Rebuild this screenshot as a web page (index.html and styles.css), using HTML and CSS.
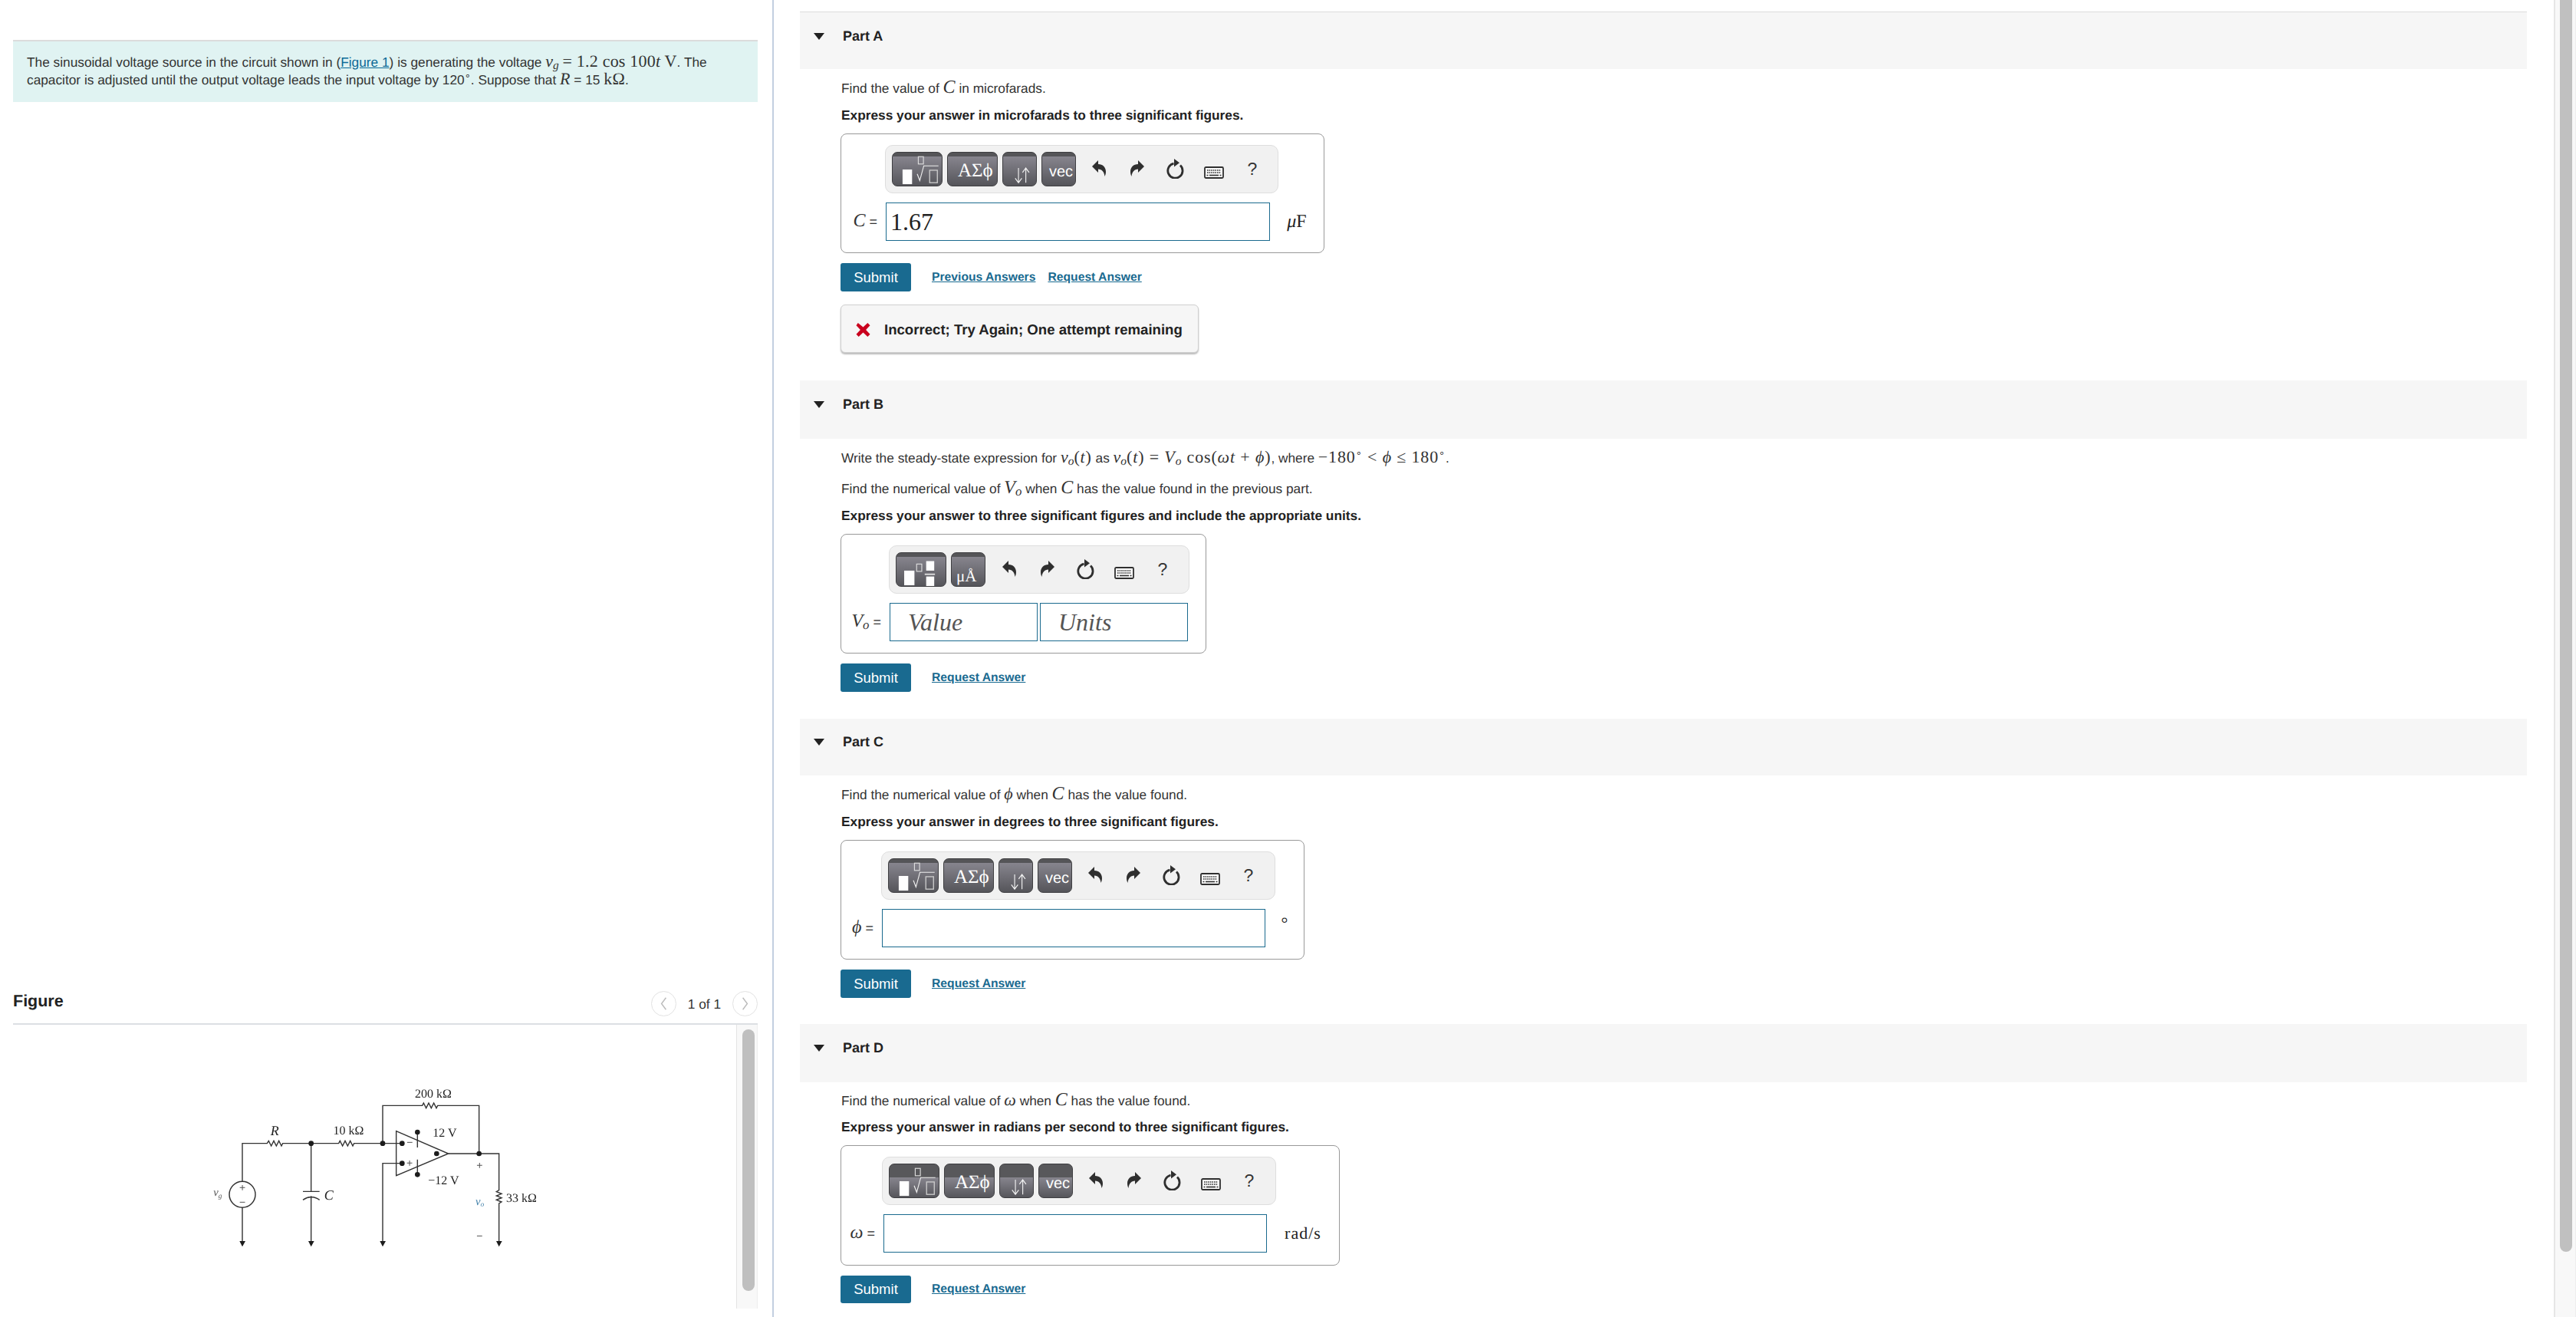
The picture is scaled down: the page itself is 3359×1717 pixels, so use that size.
FILE: index.html
```html
<!DOCTYPE html>
<html lang="en">
<head>
<meta charset="utf-8">
<title>Part A</title>
<link rel="stylesheet" href="styles.css">
</head>
<body>
<svg class="defs" width="0" height="0" aria-hidden="true">
  <symbol id="i-undo" viewBox="0 0 18 21"><path d="M0 8 L8 0 V5 C14 5 18 9 18 15 C18 18 17 20 16.5 21 C16 15.5 13 11.5 8 11.5 V16 Z"/></symbol>
  <symbol id="i-redo" viewBox="0 0 18 21"><path d="M18 8 L10 0 V5 C4 5 0 9 0 15 C0 18 1 20 1.5 21 C2 15.5 5 11.5 10 11.5 V16 Z"/></symbol>
  <symbol id="i-reset" viewBox="0 0 24 26"><path d="M9.5 6.2 A9.6 9.6 0 1 0 18 8.6" fill="none" stroke="currentColor" stroke-width="2.8"/><path d="M10 0 L17 5.2 L10 10.4 Z"/></symbol>
  <symbol id="i-kbd" viewBox="0 0 26 16"><rect x="1" y="1" width="24" height="14" rx="1.5" fill="#fafafa" stroke="currentColor" stroke-width="1.8"/><path d="M4 5h18M4 8h18" stroke="currentColor" stroke-width="1.6" stroke-dasharray="1.6 1"/><path d="M7 11.5h12" stroke="currentColor" stroke-width="1.6"/><path d="M3.5 11.5h2M20.5 11.5h2" stroke="currentColor" stroke-width="1.4"/></symbol>
  <symbol id="i-templates" viewBox="0 0 66 45"><rect x="13" y="23" width="13" height="20" fill="#fff"/><rect x="34.5" y="5.5" width="7" height="10" fill="none" stroke="#ddd" stroke-width="1.2"/><path d="M33 29 L36.5 38 L42 18 H62" fill="none" stroke="#eee" stroke-width="1.2"/><rect x="50" y="24" width="10.5" height="17" fill="none" stroke="#ccc" stroke-width="1.4"/></symbol>
  <symbol id="i-arrows" viewBox="0 0 45 45"><path d="M21 21 V40 M16.5 35 L21 41 L25.5 35 M31 41 V22 M26.5 27 L31 21 L35.5 27" fill="none" stroke="#f2f2f2" stroke-width="1.2"/></symbol>
  <symbol id="i-fraction" viewBox="0 0 66 45"><rect x="10" y="24" width="14" height="20" fill="#fff"/><rect x="27" y="15" width="7" height="10" fill="none" stroke="#ddd" stroke-width="1.2"/><rect x="40" y="11" width="11" height="13" fill="#fff"/><rect x="38" y="28" width="14" height="2" fill="#ddd"/><rect x="40" y="32" width="11" height="13" fill="#fff"/></symbol>
  <symbol id="i-x" viewBox="0 0 20 20"><path d="M2.5 0 L10 6 L16.5 0 L20 3.5 L14 10 L20 16.5 L16.5 20 L10 14 L3.5 20 L0 16.5 L6 10 L0 3.5 Z"/></symbol>
  <symbol id="i-prev" viewBox="0 0 32 32"><path d="M19 8 L13 16 L19 24" fill="none" stroke="#bbb" stroke-width="1.5"/></symbol>
  <symbol id="i-next" viewBox="0 0 32 32"><path d="M13 8 L19 16 L13 24" fill="none" stroke="#bbb" stroke-width="1.5"/></symbol>
</svg>

<div class="page">
  <aside class="left">
    <div class="problem">
      The sinusoidal voltage source in the circuit shown in (<a class="link" href="#">Figure 1</a>) is generating the voltage <span class="mi">v<sub>g</sub></span> <span class="mn">= 1.2 cos 100<i>t</i> V</span>. The<br>
      capacitor is adjusted until the output voltage leads the input voltage by 120<sup class="deg">∘</sup>. Suppose that <span class="mi">R</span> = 15 <span class="mn">kΩ</span>.
    </div>

    <div class="fig-head">
      <h2 class="fig-title">Figure</h2>
      <div class="pager">
        <span class="round"><svg class="round-icon"><use href="#i-prev"/></svg></span>
        <span class="pager-text">1 of 1</span>
        <span class="round"><svg class="round-icon"><use href="#i-next"/></svg></span>
      </div>
    </div>

    <div class="fig-panel">
      <div class="fig-canvas">
        <svg class="circuit" viewBox="0 0 1500 840" role="img" aria-label="Circuit diagram">
          <g class="wire">
            <path d="M258 720 V332 H355 l6 -10 l10 20 l10 -20 l10 20 l10 -20 l10 20 l5 -10 H635 l5 -10 l10 20 l10 -20 l10 20 l10 -20 l10 20 l5 -10 H883"/>
            <path d="M527 332 V520 M495 520 H560 M495 553 Q527 530 560 553 M527 538 V720"/>
            <path d="M807 332 V184 H962 l5 -10 l10 20 l10 -20 l10 20 l10 -20 l10 20 l5 -10 H1184 V372"/>
            <path d="M860 284 L1064 372 L860 458 Z"/>
            <path d="M807 720 V410 H883"/>
            <path d="M943 288 V348 M943 454 V395"/>
            <path d="M1064 372 H1262 V515 l-10 6 l20 8 l-20 8 l20 8 l-20 8 l20 8 l-10 6 V720"/>
          </g>
          <circle class="source" cx="258" cy="532" r="51"/>
          <g class="dot">
            <circle cx="527" cy="332" r="10"/><circle cx="807" cy="332" r="10"/><circle cx="883" cy="332" r="10"/><circle cx="883" cy="410" r="10"/>
            <circle cx="943" cy="288" r="10"/><circle cx="943" cy="454" r="10"/><circle cx="1018" cy="372" r="10"/><circle cx="1184" cy="372" r="10"/>
            <path d="M247 714 H270 L258 736 Z M516 714 H539 L527 736 Z M796 714 H819 L807 736 Z M1251 714 H1274 L1262 736 Z"/>
          </g>
          <g class="ctext">
            <text x="1005" y="152" text-anchor="middle">200 kΩ</text>
            <text x="673" y="297" text-anchor="middle">10 kΩ</text>
            <text x="385" y="300" text-anchor="middle" class="cit">R</text>
            <text x="1050" y="305" text-anchor="middle">12 V</text>
            <text x="1045" y="492" text-anchor="middle">−12 V</text>
            <text x="1350" y="560" text-anchor="middle">33 kΩ</text>
            <text x="596" y="552" text-anchor="middle" class="cit">C</text>
            <text x="145" y="538" class="cit cgrey">v<tspan dy="8" class="csub">g</tspan></text>
            <text x="1170" y="572" class="cit cblue">v<tspan dy="8" class="csub">o</tspan></text>
            <text x="258" y="518" text-anchor="middle" class="csign">+</text>
            <text x="258" y="575" text-anchor="middle" class="csign">−</text>
            <text x="1186" y="432" text-anchor="middle" class="csign cblue">+</text>
            <text x="1186" y="708" text-anchor="middle" class="csign cblue">−</text>
            <text x="913" y="343" text-anchor="middle" class="csign">−</text>
            <text x="912" y="423" text-anchor="middle" class="csign">+</text>
          </g>
        </svg>
      </div>
      <div class="fig-scroll"><div class="fig-thumb"></div></div>
    </div>
  </aside>

  <main class="main">
    <!-- Part A -->
    <section class="part part-a">
      <header class="part-head"><span class="tri"></span><h3 class="part-title">Part A</h3></header>
      <div class="part-body">
        <p class="para">Find the value of <span class="mi big">C</span> in microfarads.</p>
        <p class="para strong">Express your answer in microfarads to three significant figures.</p>
        <div class="answer answer-a">
          <div class="toolbar">
            <span class="tb tb-w"><svg class="tb-svg"><use href="#i-templates"/></svg></span>
            <span class="tb tb-w tb-greek">ΑΣϕ</span>
            <span class="tb tb-n"><svg class="tb-svg"><use href="#i-arrows"/></svg></span>
            <span class="tb tb-n tb-vec">vec</span>
            <span class="slot"><svg class="ico-undo"><use href="#i-undo"/></svg></span>
            <span class="slot"><svg class="ico-undo"><use href="#i-redo"/></svg></span>
            <span class="slot"><svg class="ico-reset"><use href="#i-reset"/></svg></span>
            <span class="slot"><svg class="ico-kbd"><use href="#i-kbd"/></svg></span>
            <span class="slot help">?</span>
          </div>
          <label class="lbl"><span class="mi big">C</span>&nbsp;=</label>
          <input class="field field-val" value="1.67" aria-label="C">
          <span class="unit"><i>μ</i>F</span>
        </div>
        <div class="actions">
          <button class="submit">Submit</button>
          <a class="act" href="#">Previous Answers</a>
          <a class="act" href="#">Request Answer</a>
        </div>
        <div class="feedback"><svg class="fb-x"><use href="#i-x"/></svg><span>Incorrect; Try Again; One attempt remaining</span></div>
      </div>
    </section>

    <!-- Part B -->
    <section class="part part-b">
      <header class="part-head"><span class="tri"></span><h3 class="part-title">Part B</h3></header>
      <div class="part-body">
        <p class="para para-tall">Write the steady-state expression for <span class="mi">v<sub>o</sub></span><span class="mn">(<i>t</i>)</span> as <span class="mi">v<sub>o</sub></span><span class="mn">(<i>t</i>) = <i>V<sub>o</sub></i> cos(<i>ωt</i> + <i>ϕ</i>)</span>, where <span class="mn">−180<sup class="deg">∘</sup> &lt; <i>ϕ</i> ≤ 180<sup class="deg">∘</sup></span>.</p>
        <p class="para">Find the numerical value of <span class="mi big">V<sub>o</sub></span> when <span class="mi big">C</span> has the value found in the previous part.</p>
        <p class="para strong">Express your answer to three significant figures and include the appropriate units.</p>
        <div class="answer answer-b">
          <div class="toolbar">
            <span class="tb tb-w"><svg class="tb-svg"><use href="#i-fraction"/></svg></span>
            <span class="tb tb-n tb-unit">μÅ</span>
            <span class="slot"><svg class="ico-undo"><use href="#i-undo"/></svg></span>
            <span class="slot"><svg class="ico-undo"><use href="#i-redo"/></svg></span>
            <span class="slot"><svg class="ico-reset"><use href="#i-reset"/></svg></span>
            <span class="slot"><svg class="ico-kbd"><use href="#i-kbd"/></svg></span>
            <span class="slot help">?</span>
          </div>
          <label class="lbl"><span class="mi big">V<sub>o</sub></span>&nbsp;=</label>
          <div class="pair">
            <input class="field field-ph" placeholder="Value" aria-label="Value">
            <input class="field field-ph" placeholder="Units" aria-label="Units">
          </div>
        </div>
        <div class="actions">
          <button class="submit">Submit</button>
          <a class="act" href="#">Request Answer</a>
        </div>
      </div>
    </section>

    <!-- Part C -->
    <section class="part part-c">
      <header class="part-head"><span class="tri"></span><h3 class="part-title">Part C</h3></header>
      <div class="part-body">
        <p class="para">Find the numerical value of <span class="mi">ϕ</span> when <span class="mi big">C</span> has the value found.</p>
        <p class="para strong">Express your answer in degrees to three significant figures.</p>
        <div class="answer answer-c">
          <div class="toolbar">
            <span class="tb tb-w"><svg class="tb-svg"><use href="#i-templates"/></svg></span>
            <span class="tb tb-w tb-greek">ΑΣϕ</span>
            <span class="tb tb-n"><svg class="tb-svg"><use href="#i-arrows"/></svg></span>
            <span class="tb tb-n tb-vec">vec</span>
            <span class="slot"><svg class="ico-undo"><use href="#i-undo"/></svg></span>
            <span class="slot"><svg class="ico-undo"><use href="#i-redo"/></svg></span>
            <span class="slot"><svg class="ico-reset"><use href="#i-reset"/></svg></span>
            <span class="slot"><svg class="ico-kbd"><use href="#i-kbd"/></svg></span>
            <span class="slot help">?</span>
          </div>
          <label class="lbl"><span class="mi big">ϕ</span>&nbsp;=</label>
          <input class="field" aria-label="phi">
          <span class="unit unit-deg">°</span>
        </div>
        <div class="actions">
          <button class="submit">Submit</button>
          <a class="act" href="#">Request Answer</a>
        </div>
      </div>
    </section>

    <!-- Part D -->
    <section class="part part-d">
      <header class="part-head"><span class="tri"></span><h3 class="part-title">Part D</h3></header>
      <div class="part-body">
        <p class="para">Find the numerical value of <span class="mi">ω</span> when <span class="mi big">C</span> has the value found.</p>
        <p class="para strong">Express your answer in radians per second to three significant figures.</p>
        <div class="answer answer-d">
          <div class="toolbar">
            <span class="tb tb-w tb-thick"><svg class="tb-svg"><use href="#i-templates"/></svg></span>
            <span class="tb tb-w tb-greek tb-thick">ΑΣϕ</span>
            <span class="tb tb-n tb-thick"><svg class="tb-svg"><use href="#i-arrows"/></svg></span>
            <span class="tb tb-n tb-vec tb-thick">vec</span>
            <span class="slot"><svg class="ico-undo"><use href="#i-undo"/></svg></span>
            <span class="slot"><svg class="ico-undo"><use href="#i-redo"/></svg></span>
            <span class="slot"><svg class="ico-reset"><use href="#i-reset"/></svg></span>
            <span class="slot"><svg class="ico-kbd"><use href="#i-kbd"/></svg></span>
            <span class="slot help">?</span>
          </div>
          <label class="lbl"><span class="mi big">ω</span>&nbsp;=</label>
          <input class="field" aria-label="omega">
          <span class="unit unit-wide">rad/s</span>
        </div>
        <div class="actions">
          <button class="submit">Submit</button>
          <a class="act" href="#">Request Answer</a>
        </div>
      </div>
    </section>
  </main>

  <div class="page-scroll"><div class="page-thumb"></div></div>
</div>
</body>
</html>
```

FILE: styles.css
```css
* { box-sizing: border-box; }
html, body { margin: 0; height: 100%; overflow: hidden; background: #fff; }
body { font: 17.3px/24px "Liberation Sans", Arial, sans-serif; color: #333; text-rendering: geometricPrecision; }
.defs { position: absolute; }
.page { display: flex; height: 100vh; }

/* left column */
.left { width: 1009px; flex: none; padding: 52px 19px 0 17px; border-right: 2px solid #c3cfe0; }
.problem { height: 81px; padding: 16px 18px 0; background: #e0f3f2; border-top: 2px solid #dcdcdc; line-height: 23px; }
.link { color: #0b6a97; text-decoration: underline; }
.mi { font-family: "Liberation Serif", serif; font-style: italic; font-size: 22px; line-height: 0; }
.mi.big { font-size: 24px; }
.mn { font-family: "Liberation Serif", serif; font-size: 22px; letter-spacing: .2px; line-height: 0; }
sub { font-size: .7em; line-height: 0; font-style: italic; vertical-align: -.2em; }
.deg { font-size: 13px; line-height: 0; }

.fig-head { display: flex; justify-content: space-between; align-items: flex-start; height: 44px; margin-top: 1159px; border-bottom: 2px solid #dcdfe3; }
.fig-title { margin: 0; font-size: 21.5px; line-height: 26px; font-weight: 700; color: #222; }
.pager { display: flex; align-items: center; gap: 15px; height: 33px; }
.pager-text { color: #333; }
.round { width: 33px; height: 33px; border: 1px solid #e2e2e2; border-radius: 50%; display: block; }
.round-icon { width: 31px; height: 31px; display: block; }

.fig-panel { display: flex; height: 370px; }
.fig-canvas { flex: 1; padding: 44px 0 0 213px; }
.circuit { width: 500px; height: 280px; display: block; filter: blur(.4px); }
.wire path { fill: none; stroke: #333; stroke-width: 4.2; }
.source { fill: #fff; stroke: #333; stroke-width: 4.4; }
.dot { fill: #1c1c1c; }
.ctext text { font-family: "Liberation Serif", serif; font-size: 48px; fill: #222; }
.ctext .cit { font-style: italic; font-size: 54px; }
.ctext .cgrey { font-size: 44px; fill: #555; }
.ctext .cblue { fill: #3f7fa8; font-size: 44px; }
.ctext .csign { font-size: 42px; fill: #555; font-family: "Liberation Sans", sans-serif; }
.ctext .csub { font-size: 28px; }
.fig-scroll { width: 28px; padding: 6px 5px 0 7px; background: #f8f8f8; border-left: 1px solid #e4e4e4; border-right: 1px solid #eee; }
.fig-thumb { width: 16px; height: 341px; border-radius: 8px; background: #bfbfbf; }

/* right column */
.main { flex: 1; min-width: 0; padding: 15px 35px 0 34px; }
.part { margin-bottom: 35px; }
.part-a { margin-bottom: 36px; }
.part-c { margin-bottom: 34px; }
.part-head { display: flex; align-items: flex-start; gap: 24px; height: 75px; padding: 19px 0 0 18px; background: #f6f6f6; }
.part-a .part-head { border-top: 1px solid #dcdcdc; }
.part-b .part-head, .part-d .part-head { height: 76px; }
.part-c .part-head { height: 74px; padding-top: 18px; }
.tri { width: 0; height: 0; margin-top: 8px; border: 7px solid transparent; border-top: 9px solid #222; border-bottom: 0; }
.part-title { margin: 0; font-size: 18px; line-height: 24px; font-weight: 700; color: #222; }
.part-body { padding: 13px 0 0 53px; }
.part-d .part-body { padding-top: 12px; }
.para { height: 24px; margin: 0 0 11px; padding-left: 1px; white-space: nowrap; line-height: 24px; }
.part-d .para { margin-bottom: 10px; }
.para-tall { margin-bottom: 16px; }
.para-tall .mn { letter-spacing: .85px; }
.strong { margin-bottom: 12px; font-weight: 700; color: #222; }
.part-d .strong { margin-bottom: 12px; }

.answer { display: grid; row-gap: 12px; align-items: center; padding: 14px 0 15px; border: 1px solid #999; border-radius: 8px; background: #fff; font-size: 18px; }
.answer-a { width: 631px; grid-template-columns: 58px 501px 70px; }
.answer-b { width: 477px; grid-template-columns: 63px 388px 24px; }
.answer-c { width: 605px; grid-template-columns: 53px 500px 50px; }
.answer-d { width: 651px; grid-template-columns: 55px 500px 94px; padding-bottom: 16px; }
.toolbar { grid-column: 2 / 4; display: flex; align-items: center; height: 63px; margin-left: -1px; padding-left: 8px; background: #f1f1f1; border: 1px solid #dedede; border-radius: 10px; }
.answer-a .toolbar { width: 513px; }
.answer-b .toolbar { width: 392px; }
.answer-c .toolbar { width: 514px; }
.answer-d .toolbar { width: 514px; margin-left: -2px; }

.tb { display: flex; flex: none; align-items: flex-end; height: 45px; margin-right: 6px; color: #fff; border: 1px solid #3f3f42; border-radius: 7px; overflow: hidden; background: linear-gradient(#555558 0 5px, #87858e 5px, #55555a 100%); }
.tb-thick { background: linear-gradient(#58585b 0 17px, #87858e 17px, #56565b 100%); }
.tb-w { width: 66px; }
.tb-n { width: 45px; }
.tb-n + .tb-n { margin-right: 5px; }
.tb-svg { width: 100%; height: 100%; display: block; }
.tb-greek { padding: 0 0 4px 13px; font: 25px/30px "Liberation Serif", serif; }
.tb-vec { padding: 0 0 5px 9px; font-size: 20px; line-height: 26px; }
.tb-unit { padding: 0 0 0 6px; font: 21px/26px "Liberation Serif", serif; }
.slot { display: flex; flex: none; align-items: center; justify-content: center; width: 50px; height: 45px; color: #2f2f2f; fill: #2f2f2f; }
.ico-undo { width: 18px; height: 21px; margin-top: -2px; }
.ico-reset { width: 24px; height: 26px; margin-top: -2px; }
.ico-kbd { width: 26px; height: 16px; margin-top: 9px; }
.help { margin-top: -2px; font-size: 23px; color: #333; }
.answer-b .tb-w { margin-right: 6px; }
.answer-b .tb-n { margin-right: 6px; }

.lbl { justify-self: end; padding-right: 11px; white-space: nowrap; }
.field { display: block; width: 100%; height: 50px; padding: 0 5px; border: 1px solid #1a6a8e; border-radius: 0; outline: 0; background: #fff; color: #222; font: 32px "Liberation Serif", serif; }
.field-val { padding-left: 5px; }
.pair { display: flex; gap: 3px; }
.field-ph { width: 193px; padding-left: 23px; font-style: italic; font-size: 32px; }
.field-ph::placeholder { color: #555; opacity: 1; }
.unit { justify-self: center; font: 24px "Liberation Serif", serif; color: #222; }
.unit-deg { margin-top: -12px; font-size: 22px; }
.unit-wide { font-size: 22px; letter-spacing: 1px; }

.actions { display: flex; align-items: center; height: 37px; margin-top: 13px; }
.part-d .actions { height: 36px; }
.submit { width: 92px; height: 100%; margin-right: 27px; padding: 0; border: 0; border-radius: 3px; background: #196a90; color: #fff; font: 18.5px "Liberation Sans", sans-serif; }
.act { margin-right: 16px; color: #196a90; font-size: 15.7px; font-weight: 700; text-decoration: underline; }

.feedback { display: flex; align-items: center; width: 467px; height: 63px; margin-top: 17px; padding: 2px 0 0 19px; gap: 18px; background: #f6f6f6; border: 1px solid #cfcfcf; border-radius: 6px; box-shadow: 0 2px 2px #bbb; color: #222; font-size: 18.6px; font-weight: 700; }
.fb-x { width: 19px; height: 18px; flex: none; fill: #c9001e; }

/* page scrollbar */
.page-scroll { width: 29px; flex: none; padding-left: 6px; background: #f8f8f8; border-left: 2px solid #e6e6e6; border-right: 1px solid #eee; }
.page-thumb { width: 16px; height: 1632px; border-radius: 0 0 8px 8px; background: #c0c0c0; }
```
